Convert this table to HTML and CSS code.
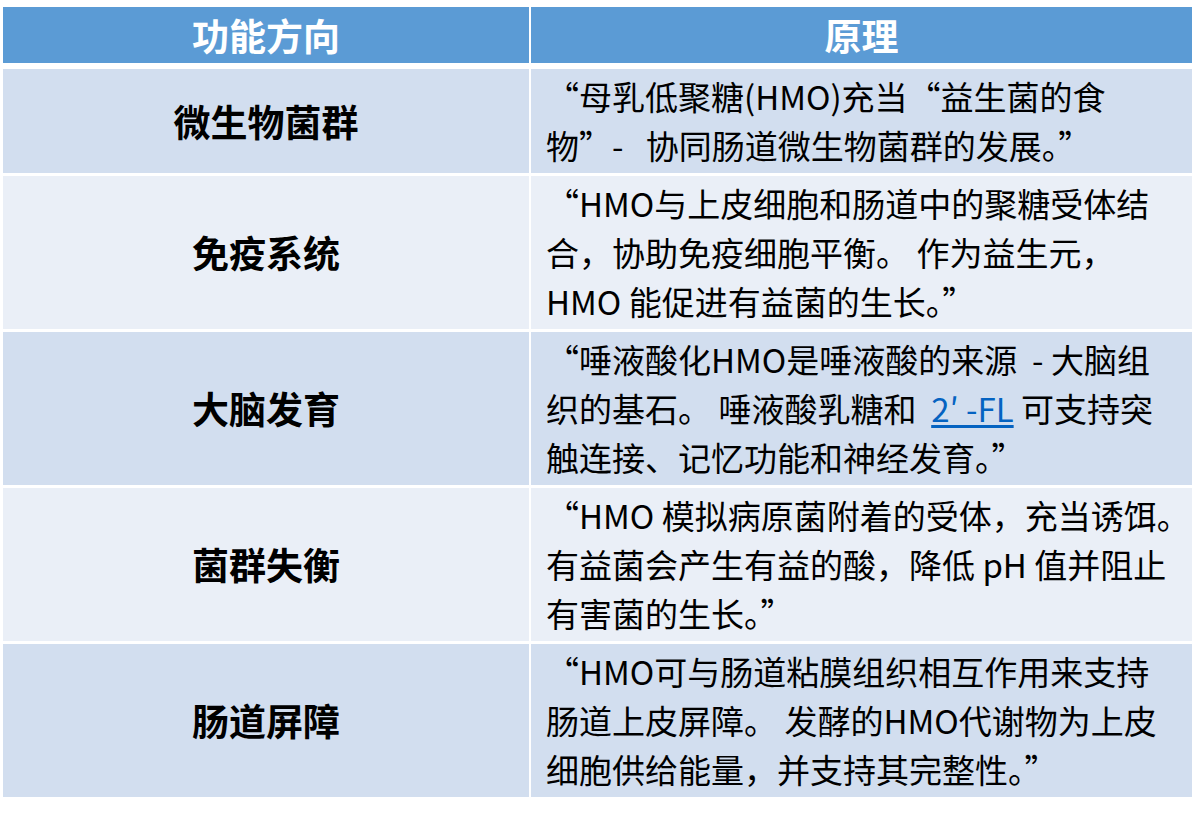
FILE: index.html
```html
<!DOCTYPE html>
<html lang="zh-CN">
<head>
<meta charset="utf-8">
<title>HMO 功能方向</title>
<link rel="stylesheet" href="styles.css">
</head>
<body>
<div class="table">
  <div class="row head">
    <div class="cell c1">功能方向</div>
    <div class="cell c2">原理</div>
  </div>
  <div class="row odd">
    <div class="cell c1">微生物菌群</div>
    <div class="cell c2">“母乳低聚糖(HMO)充当“益生菌的食<br>物”-&nbsp;&nbsp;&nbsp;协同肠道微生物菌群的发展。”</div>
  </div>
  <div class="row even">
    <div class="cell c1">免疫系统</div>
    <div class="cell c2">“HMO与上皮细胞和肠道中的聚糖受体结<br>合，协助免疫细胞平衡。 作为益生元，<br>HMO 能促进有益菌的生长。”</div>
  </div>
  <div class="row odd">
    <div class="cell c1">大脑发育</div>
    <div class="cell c2">“唾液酸化HMO是唾液酸的来源&nbsp; - 大脑组<br>织的基石。 唾液酸乳糖和&nbsp; <a class="link" href="#">2′ -FL</a> 可支持突<br>触连接、记忆功能和神经发育。”</div>
  </div>
  <div class="row even">
    <div class="cell c1">菌群失衡</div>
    <div class="cell c2">“HMO 模拟病原菌附着的受体，充当诱饵。<br>有益菌会产生有益的酸，降低 pH 值并阻止<br>有害菌的生长。”</div>
  </div>
  <div class="row odd">
    <div class="cell c1">肠道屏障</div>
    <div class="cell c2">“HMO可与肠道粘膜组织相互作用来支持<br>肠道上皮屏障。 发酵的HMO代谢物为上皮<br>细胞供给能量，并支持其完整性。”</div>
  </div>
</div>
</body>
</html>
```
FILE: styles.css
```css
html, body {
  margin: 0;
  padding: 0;
  background: #ffffff;
}
body {
  padding: 7px 0 0 3px;
  font-family: "Noto Sans CJK SC", "Noto Sans", sans-serif;
  color: #000;
}
.table {
  display: flex;
  flex-direction: column;
  gap: 3px;
  width: 1189px;
}
.row {
  display: grid;
  grid-template-columns: 526px 661px;
  column-gap: 2px;
}
.cell {
  display: flex;
  flex-direction: column;
  justify-content: center;
}
.c1 {
  align-items: center;
  font-size: 37px;
  font-weight: 700;
  line-height: 49px;
}
.c2 {
  display: block;
  padding: 3px 0 3px 15px;
  font-size: 33px;
  line-height: 49px;
  white-space: nowrap;
  overflow: hidden;
}
.row.odd .cell {
  background: #d2deef;
}
.row.even .cell {
  background: #eaeff7;
}
.head {
  margin-bottom: 3px;
}
.head .cell {
  background: #5b9bd5;
  color: #fff;
  height: 56px;
  font-size: 37px;
  font-weight: 700;
  align-items: center;
  justify-content: center;
  display: flex;
  padding: 0;
  line-height: 56px;
}
.link {
  color: #0563c1;
  text-decoration: underline;
  text-underline-offset: 3px;
}
```
